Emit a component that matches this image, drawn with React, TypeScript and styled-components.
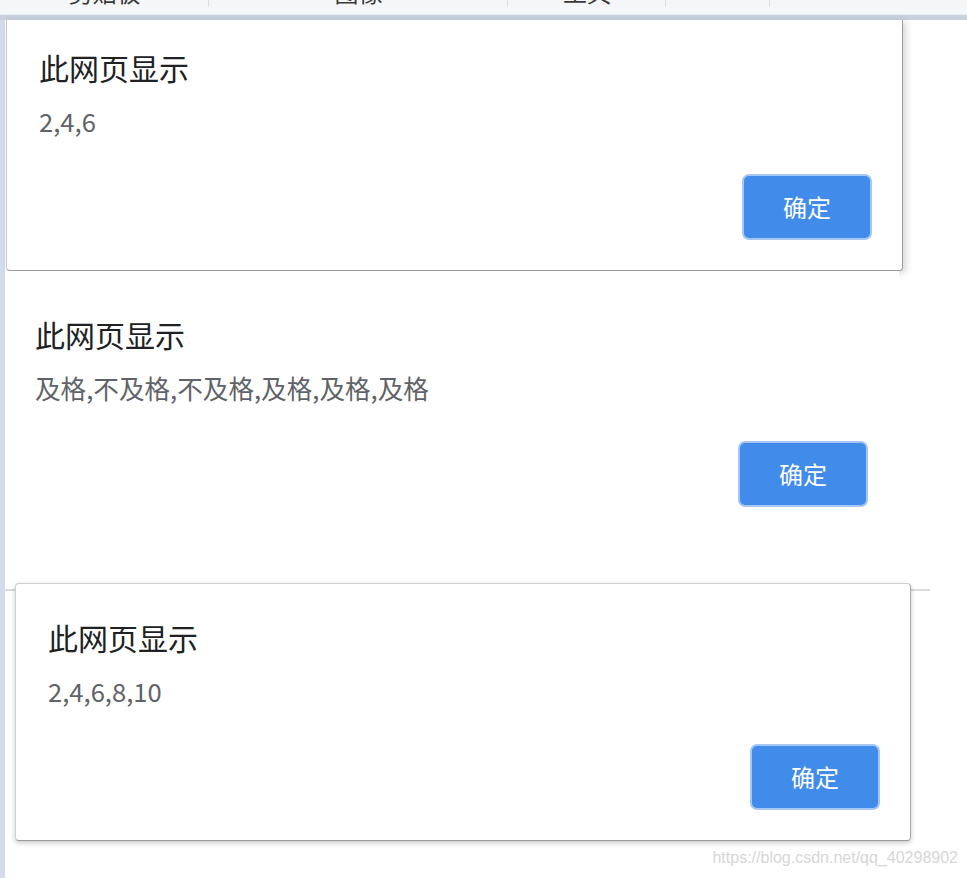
import React from "react";
import styled, { createGlobalStyle, css } from "styled-components";

const Global = createGlobalStyle`
  html, body { margin: 0; padding: 0; background: #ffffff; }
  body { font-family: "Noto Sans CJK SC", "Noto Sans", sans-serif; }
  *, *::before, *::after { box-sizing: border-box; }
`;

const Page = styled.div`
  width: 967px;
  height: 878px;
  overflow: hidden;
  display: flex;
  flex-direction: column;
  background: #ffffff;
`;

const TabStrip = styled.div`
  flex: none;
  height: 15px;
  display: flex;
  background: #f5f6f8;
  border-bottom: 1px solid #e8eaee;
  overflow: hidden;
`;

const Tab = styled.div<{ $w?: number; $sep?: boolean }>`
  ${(p) => (p.$w ? css`width: ${p.$w}px; flex: none;` : css`flex: 1;`)}
  height: 14px;
  display: flex;
  justify-content: center;
  align-items: flex-start;
  overflow: hidden;
  ${(p) =>
    p.$sep &&
    css`
      background: linear-gradient(#dcdfe4, #dcdfe4) no-repeat right top / 1px 7px;
    `}
`;

const TabLabel = styled.span`
  font-size: 24px;
  line-height: 24px;
  margin-top: -20px;
  color: #3a3a3a;
  white-space: nowrap;
`;

const Band = styled.div`
  flex: none;
  height: 5px;
  background: #c8d0de;
`;

const Body = styled.div`
  flex: 1;
  display: flex;
  min-height: 0;
`;

const Rail = styled.div`
  flex: none;
  width: 5px;
  background: #d2dbe9;
`;

const Main = styled.main`
  flex: 1;
  display: flex;
  flex-direction: column;
  align-items: flex-start;
`;

type Kind = "cropped" | "bare" | "window";

const Dialog = styled.section<{
  $kind: Kind;
  $width: number;
  $ml: number;
  $pt: number;
  $pl: number;
}>`
  position: relative;
  z-index: 1;
  flex: none;
  width: ${(p) => p.$width}px;
  margin-left: ${(p) => p.$ml}px;
  padding: ${(p) => p.$pt}px 30px 30px ${(p) => p.$pl}px;
  background: #ffffff;
  display: flex;
  flex-direction: column;
  ${(p) =>
    p.$kind === "cropped" &&
    css`
      border: 1px solid #c4c4c4;
      border-top: none;
      border-right-color: #9a9a9a;
      border-bottom-color: #9a9a9a;
      border-radius: 0 0 4px 4px;
      box-shadow: 3px 2px 7px rgba(0, 0, 0, 0.16);
    `}
  ${(p) =>
    p.$kind === "window" &&
    css`
      border: 1px solid #cfcfcf;
      border-right-color: #a8a8a8;
      border-bottom-color: #9c9c9c;
      border-radius: 4px;
      box-shadow: 0 2px 5px rgba(0, 0, 0, 0.22);
    `}
  ${(p) =>
    p.$kind === "bare" &&
    css`
      padding-right: 31px;
      padding-bottom: 31px;
    `}
`;

const Title = styled.h2`
  margin: 0;
  font-size: 30px;
  line-height: 30px;
  font-weight: 400;
  color: #202124;
`;

const Message = styled.p`
  margin: 26px 0 0;
  font-size: 25.6px;
  line-height: 26px;
  color: #5f6368;
  white-space: nowrap;
`;

const Actions = styled.div`
  display: flex;
  justify-content: flex-end;
  margin-top: 40px;
`;

const OkButton = styled.button`
  width: 130px;
  height: 66px;
  padding: 0;
  border: 2px solid #a6c7f6;
  border-radius: 7px;
  background: #418bea;
  color: #ffffff;
  font-family: "Noto Sans CJK SC", "Noto Sans", sans-serif;
  font-size: 24px;
  line-height: 24px;
  cursor: pointer;
`;

const Backdrop = styled.div`
  flex: none;
  width: 925px;
  margin-top: 45px;
  background: linear-gradient(#d9d9d9, #d9d9d9) no-repeat 0 6px / 100% 2px;
`;

const Watermark = styled.div`
  align-self: stretch;
  margin-top: 8px;
  padding-right: 9px;
  text-align: right;
  font-family: "Liberation Sans", Arial, sans-serif;
  font-size: 16px;
  line-height: 18px;
  color: #d6d6d6;
`;

type AlertProps = {
  kind: Kind;
  width: number;
  ml: number;
  pt: number;
  pl: number;
  message: string;
};

function Alert({ kind, width, ml, pt, pl, message }: AlertProps) {
  return (
    <Dialog $kind={kind} $width={width} $ml={ml} $pt={pt} $pl={pl}>
      <Title>此网页显示</Title>
      <Message>{message}</Message>
      <Actions>
        <OkButton>确定</OkButton>
      </Actions>
    </Dialog>
  );
}

const tabs = [
  { w: 209, label: "剪贴板", sep: true },
  { w: 299, label: "图像", sep: true },
  { w: 158, label: "工具", sep: true },
  { w: 104, label: "", sep: true },
  { w: 0, label: "", sep: false },
];

export default function App() {
  return (
    <>
      <Global />
      <Page>
        <TabStrip>
          {tabs.map((t, i) => (
            <Tab key={i} $w={t.w || undefined} $sep={t.sep}>
              {t.label && <TabLabel>{t.label}</TabLabel>}
            </Tab>
          ))}
        </TabStrip>
        <Band />
        <Body>
          <Rail />
          <Main>
            <Alert kind="cropped" width={897} ml={1} pt={32} pl={32} message="2,4,6" />
            <Alert
              kind="bare"
              width={894}
              ml={0}
              pt={48}
              pl={30}
              message="及格,不及格,不及格,及格,及格,及格"
            />
            <Backdrop>
              <Alert kind="window" width={896} ml={10} pt={38} pl={32} message="2,4,6,8,10" />
            </Backdrop>
            <Watermark>https://blog.csdn.net/qq_40298902</Watermark>
          </Main>
        </Body>
      </Page>
    </>
  );
}
